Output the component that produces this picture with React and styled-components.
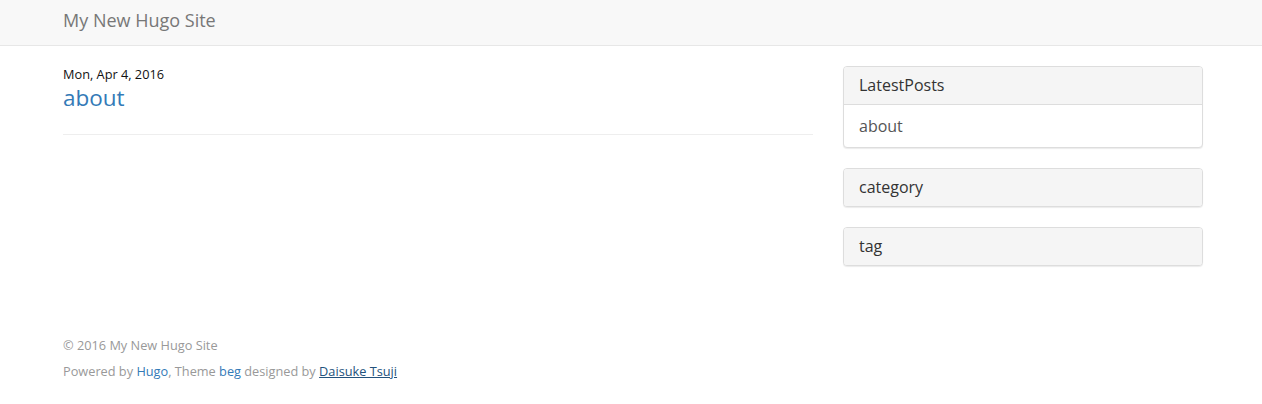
import React from "react";
import styled, { createGlobalStyle } from "styled-components";

const Global = createGlobalStyle`
  html, body { margin: 0; padding: 0; background: #fff; }
  body {
    font-family: "Open Sans", "Helvetica Neue", Arial, sans-serif;
    font-size: 14px;
    line-height: 1.42857;
    color: #333;
  }
  * { box-sizing: border-box; }
`;

const Navbar = styled.nav`
  height: 46px;
  background: #f8f8f8;
  border-bottom: 1px solid #e7e7e7;
`;

const Container = styled.div`
  width: 1170px;
  margin-left: calc(50% - 583px);
  padding: 0 15px;
`;

const Brand = styled.a`
  display: block;
  font-size: 18px;
  line-height: 20px;
  padding: 10px 0 15px;
  color: #777;
  text-decoration: none;
`;

const Row = styled.div`
  display: grid;
  grid-template-columns: 2fr 1fr;
  margin: 0 -15px;
  padding-top: 20px;
`;

const Col = styled.div`
  padding: 0 15px;
  min-width: 0;
`;

const PostDate = styled.div`
  font-size: 12.75px;
  line-height: 17px;
  color: #111;
`;

const PostTitle = styled.a`
  display: block;
  font-size: 22.5px;
  line-height: 30px;
  color: #337ab7;
  text-decoration: none;
`;

const Rule = styled.hr`
  margin: 21px 0 0;
  border: 0;
  border-top: 1px solid #eee;
`;

const Panel = styled.div`
  border: 1px solid #ddd;
  border-radius: 4px;
  background: #fff;
  margin-bottom: 20px;
  box-shadow: 0 1px 1px rgba(0, 0, 0, 0.08);
  overflow: hidden;
`;

const PanelHeading = styled.div`
  background: #f5f5f5;
  padding: 10px 15px;
  font-size: 16px;
  line-height: 17px;
  color: #333;
  border-bottom: ${(p) => (p.$hasBody ? "1px solid #ddd" : "0")};
`;

const ListItem = styled.a`
  display: block;
  padding: 10px 15px;
  font-size: 16px;
  line-height: 22px;
  color: #555;
  text-decoration: none;
`;

const Footer = styled.footer`
  padding-top: 46px;
  color: #999;
  font-size: 12.75px;
`;

const FooterLine = styled.p`
  margin: 0;
  line-height: 26px;
`;

const FLink = styled.a`
  color: ${(p) => (p.$dark ? "#23527c" : "#337ab7")};
  text-decoration: ${(p) => (p.$dark ? "underline" : "none")};
`;

export default function App() {
  return (
    <>
      <Global />
      <Navbar>
        <Container>
          <Brand href="#">My New Hugo Site</Brand>
        </Container>
      </Navbar>
      <Container>
        <Row>
          <Col>
            <PostDate>Mon, Apr 4, 2016</PostDate>
            <PostTitle href="#">about</PostTitle>
            <Rule />
          </Col>
          <Col>
            <Panel>
              <PanelHeading $hasBody>LatestPosts</PanelHeading>
              <ListItem href="#">about</ListItem>
            </Panel>
            <Panel>
              <PanelHeading>category</PanelHeading>
            </Panel>
            <Panel>
              <PanelHeading>tag</PanelHeading>
            </Panel>
          </Col>
        </Row>
        <Footer>
          <FooterLine>© 2016 My New Hugo Site</FooterLine>
          <FooterLine>
            Powered by <FLink href="#">Hugo</FLink>, Theme <FLink href="#">beg</FLink> designed by{" "}
            <FLink href="#" $dark>Daisuke Tsuji</FLink>
          </FooterLine>
        </Footer>
      </Container>
    </>
  );
}
